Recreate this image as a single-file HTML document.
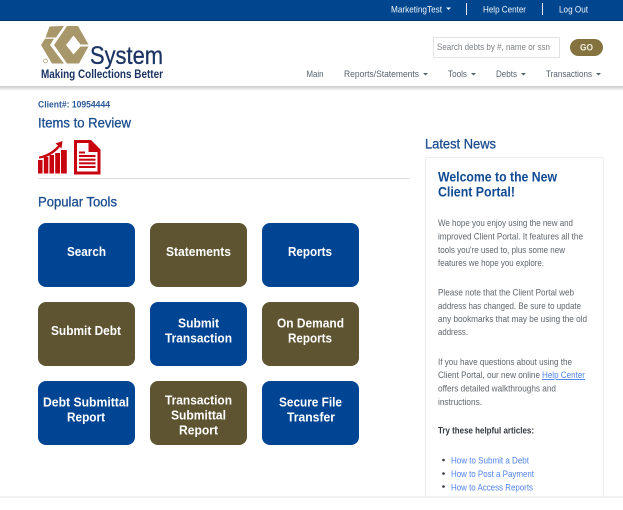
<!DOCTYPE html>
<html lang="en"><head><meta charset="utf-8"><title>IC System Client Portal</title>
<style>
html,body{margin:0;padding:0;background:#fff;width:623px;height:510px;overflow:hidden}
svg{display:block;position:absolute;left:0;top:0;filter:blur(.35px)}
text{font-family:"Liberation Sans",sans-serif}
.top{fill:#f0f4f9;font-size:9.500px}
.nav{fill:#56636f;font-size:9.500px}
.h{fill:#1a4d8f;font-size:14px;stroke:#1a4d8f;stroke-width:.3px}
.b{fill:#fff;font-size:13px;font-weight:bold}
.p{fill:#5f656b;font-size:9.500px}
.l{fill:#4f84ee;font-size:9.500px}
</style></head><body>
<svg width="623" height="510" viewBox="0 0 623 510" xmlns="http://www.w3.org/2000/svg">
<defs><linearGradient id="s" x1="0" y1="0" x2="0" y2="1"><stop offset="0" stop-color="#c8c8c8"/><stop offset="1" stop-color="#fff"/></linearGradient></defs>
<rect width="623" height="21" fill="#00468f"/>
<rect y="20" width="623" height="1" fill="#0a3468"/>
<rect y="86" width="623" height="5" fill="url(#s)"/>
<text class="top" x="391" y="12.500" textLength="51" lengthAdjust="spacingAndGlyphs">MarketingTest</text>
<polygon points="446,7.500 451,7.500 448.500,10" fill="#f0f4f9"/>
<rect x="466" y="3" width="1" height="12" fill="#dfe8f2"/>
<text class="top" x="483" y="12.500" textLength="43" lengthAdjust="spacingAndGlyphs">Help Center</text>
<rect x="542" y="3" width="1" height="12" fill="#dfe8f2"/>
<text class="top" x="559" y="12.500" textLength="29" lengthAdjust="spacingAndGlyphs">Log Out</text>

<polygon points="49.500,26.500 64,26 56,37.500 45.500,37.500" fill="#a8976a"/>
<polygon points="41,45 45,38.800 54,38.800 50,45 64,63.500 52,63.500" fill="#a8976a"/>
<polygon points="67,26 78,26 88.500,44.500 80.500,44.500 73.500,35.500 66,45 73.500,54.500 80.500,46.500 88.500,46.500 79,63.500 67,63.500 54,45" fill="#a8976a"/>
<circle cx="45.500" cy="61" r="2" fill="none" stroke="#a8976a" stroke-width=".7"/>
<text x="90" y="64" font-size="25" fill="#1c3463" stroke="#1c3463" stroke-width=".3" textLength="73" lengthAdjust="spacingAndGlyphs">System</text>
<text x="41" y="78" font-size="12" font-weight="bold" fill="#1c3463" textLength="122" lengthAdjust="spacingAndGlyphs">Making Collections Better</text>

<rect x="433.500" y="37.500" width="126" height="20" fill="#fff" stroke="#e3e3e3"/>
<text x="437" y="50" font-size="9.200" fill="#7b7f83" textLength="113" lengthAdjust="spacingAndGlyphs">Search debts by #, name or ssn</text>
<rect x="570" y="39" width="33" height="17" rx="8.500" fill="#84733f"/>
<text x="580" y="50.500" font-size="9.500" font-weight="bold" fill="#f3efe3" textLength="13" lengthAdjust="spacingAndGlyphs">GO</text>

<text class="nav" x="306.500" y="77" textLength="17" lengthAdjust="spacingAndGlyphs">Main</text>
<text class="nav" x="344" y="77" textLength="75" lengthAdjust="spacingAndGlyphs">Reports/Statements</text>
<polygon points="423,73 428,73 425.500,75.500" fill="#56636f"/>
<text class="nav" x="448" y="77" textLength="19" lengthAdjust="spacingAndGlyphs">Tools</text>
<polygon points="471,73 476,73 473.500,75.500" fill="#56636f"/>
<text class="nav" x="496" y="77" textLength="21" lengthAdjust="spacingAndGlyphs">Debts</text>
<polygon points="521,73 526,73 523.500,75.500" fill="#56636f"/>
<text class="nav" x="546" y="77" textLength="46" lengthAdjust="spacingAndGlyphs">Transactions</text>
<polygon points="596,73 601,73 598.500,75.500" fill="#56636f"/>

<text x="38" y="107.500" font-size="9.200" font-weight="bold" fill="#2a5a96" textLength="72" lengthAdjust="spacingAndGlyphs">Client#: 10954444</text>
<text class="h" x="38" y="127.500" textLength="93" lengthAdjust="spacingAndGlyphs">Items to Review</text>

<g fill="#c8050f">
<rect x="38" y="160" width="4.500" height="13.500"/>
<rect x="43.800" y="157" width="4.500" height="16.500"/>
<rect x="49.500" y="155" width="4.500" height="18.500"/>
<rect x="55.200" y="153" width="4.800" height="20.500"/>
<rect x="61" y="150" width="5.800" height="23.500"/>
<path d="M39 156.500 C47 155 53 151 58 145.500 L55.500 143.500 L62.500 141 L61.500 148.500 L59.800 147 C55 153 47 158 39 158.500Z"/>
<path fill-rule="evenodd" d="M74 140 H91 L100.500 149.500 V174.500 H74Z M77 143 V171.500 H97.500 V152 H88.500 V143Z"/>
<path d="M91.500 144 L96.500 149 H91.500Z"/>
<rect x="79" y="151.500" width="6" height="2"/>
<rect x="79" y="155" width="16.500" height="2"/>
<rect x="79" y="158.700" width="16.500" height="2"/>
<rect x="79" y="162.300" width="16.500" height="2"/>
<rect x="79" y="166" width="16.500" height="2"/>
</g>
<rect x="38" y="178" width="372" height="1" fill="#dcdcdc"/>
<text class="h" x="38" y="206.500" textLength="79" lengthAdjust="spacingAndGlyphs">Popular Tools</text>

<rect x="38" y="223" width="97" height="64" rx="8" fill="#004494"/>
<rect x="150" y="223" width="97" height="64" rx="8" fill="#5e5432"/>
<rect x="262" y="223" width="97" height="64" rx="8" fill="#004494"/>
<rect x="38" y="302" width="97" height="64" rx="8" fill="#5e5432"/>
<rect x="150" y="302" width="97" height="64" rx="8" fill="#004494"/>
<rect x="262" y="302" width="97" height="64" rx="8" fill="#5e5432"/>
<rect x="38" y="381" width="97" height="64" rx="8" fill="#004494"/>
<rect x="150" y="381" width="97" height="64" rx="8" fill="#5e5432"/>
<rect x="262" y="381" width="97" height="64" rx="8" fill="#004494"/>

<text class="b" x="67" y="256" textLength="39" lengthAdjust="spacingAndGlyphs">Search</text>
<text class="b" x="166" y="256" textLength="65" lengthAdjust="spacingAndGlyphs">Statements</text>
<text class="b" x="288" y="256" textLength="44" lengthAdjust="spacingAndGlyphs">Reports</text>
<text class="b" x="51" y="335" textLength="70" lengthAdjust="spacingAndGlyphs">Submit Debt</text>
<text class="b" x="178" y="327.500" textLength="41" lengthAdjust="spacingAndGlyphs">Submit</text>
<text class="b" x="165" y="342.500" textLength="67" lengthAdjust="spacingAndGlyphs">Transaction</text>
<text class="b" x="277" y="327.500" textLength="67" lengthAdjust="spacingAndGlyphs">On Demand</text>
<text class="b" x="288" y="342.500" textLength="44" lengthAdjust="spacingAndGlyphs">Reports</text>
<text class="b" x="43" y="406.500" textLength="86" lengthAdjust="spacingAndGlyphs">Debt Submittal</text>
<text class="b" x="67" y="421.500" textLength="38" lengthAdjust="spacingAndGlyphs">Report</text>
<text class="b" x="165" y="404.500" textLength="67" lengthAdjust="spacingAndGlyphs">Transaction</text>
<text class="b" x="171" y="419.500" textLength="55" lengthAdjust="spacingAndGlyphs">Submittal</text>
<text class="b" x="179" y="434.500" textLength="39" lengthAdjust="spacingAndGlyphs">Report</text>
<text class="b" x="279" y="406.500" textLength="63" lengthAdjust="spacingAndGlyphs">Secure File</text>
<text class="b" x="287" y="421.500" textLength="48" lengthAdjust="spacingAndGlyphs">Transfer</text>

<text class="h" x="425" y="148.500" textLength="71" lengthAdjust="spacingAndGlyphs">Latest News</text>
<rect x="425.500" y="157.500" width="178" height="345" rx="2" fill="#fff" stroke="#ececec"/>
<text x="438" y="181.500" font-size="13.500" font-weight="bold" fill="#104a92" textLength="119" lengthAdjust="spacingAndGlyphs">Welcome to the New</text>
<text x="438" y="196.500" font-size="13.500" font-weight="bold" fill="#104a92" textLength="77" lengthAdjust="spacingAndGlyphs">Client Portal!</text>

<text class="p" x="438" y="226" textLength="135" lengthAdjust="spacingAndGlyphs">We hope you enjoy using the new and</text>
<text class="p" x="438" y="239.500" textLength="145" lengthAdjust="spacingAndGlyphs">improved Client Portal. It features all the</text>
<text class="p" x="438" y="253" textLength="127" lengthAdjust="spacingAndGlyphs">tools you're used to, plus some new</text>
<text class="p" x="438" y="266" textLength="106" lengthAdjust="spacingAndGlyphs">features we hope you explore.</text>
<text class="p" x="438" y="295.500" textLength="136" lengthAdjust="spacingAndGlyphs">Please note that the Client Portal web</text>
<text class="p" x="438" y="309" textLength="143" lengthAdjust="spacingAndGlyphs">address has changed. Be sure to update</text>
<text class="p" x="438" y="322" textLength="149" lengthAdjust="spacingAndGlyphs">any bookmarks that may be using the old</text>
<text class="p" x="438" y="335" textLength="30" lengthAdjust="spacingAndGlyphs">address.</text>
<text class="p" x="438" y="365" textLength="134" lengthAdjust="spacingAndGlyphs">If you have questions about using the</text>
<text class="p" x="438" y="378" textLength="102" lengthAdjust="spacingAndGlyphs">Client Portal, our new online</text>
<text class="l" x="542" y="378" textLength="43" lengthAdjust="spacingAndGlyphs" text-decoration="underline">Help Center</text>
<text class="p" x="438" y="391.500" textLength="118" lengthAdjust="spacingAndGlyphs">offers detailed walkthroughs and</text>
<text class="p" x="438" y="405" textLength="44" lengthAdjust="spacingAndGlyphs">instructions.</text>
<text x="438" y="433.500" font-size="9.500" font-weight="bold" fill="#33383e" textLength="96" lengthAdjust="spacingAndGlyphs">Try these helpful articles:</text>
<circle cx="443.500" cy="460" r="1.300" fill="#33383e"/>
<circle cx="443.500" cy="473.500" r="1.300" fill="#33383e"/>
<circle cx="443.500" cy="486.500" r="1.300" fill="#33383e"/>
<text class="l" x="451" y="463.500" textLength="78" lengthAdjust="spacingAndGlyphs">How to Submit a Debt</text>
<text class="l" x="451" y="477" textLength="83" lengthAdjust="spacingAndGlyphs">How to Post a Payment</text>
<text class="l" x="451" y="490.500" textLength="82" lengthAdjust="spacingAndGlyphs">How to Access Reports</text>

<rect y="497" width="623" height="13" fill="#fff"/>
<rect y="496.500" width="623" height="1" fill="#e6e6e6"/>
</svg>
</body></html>
